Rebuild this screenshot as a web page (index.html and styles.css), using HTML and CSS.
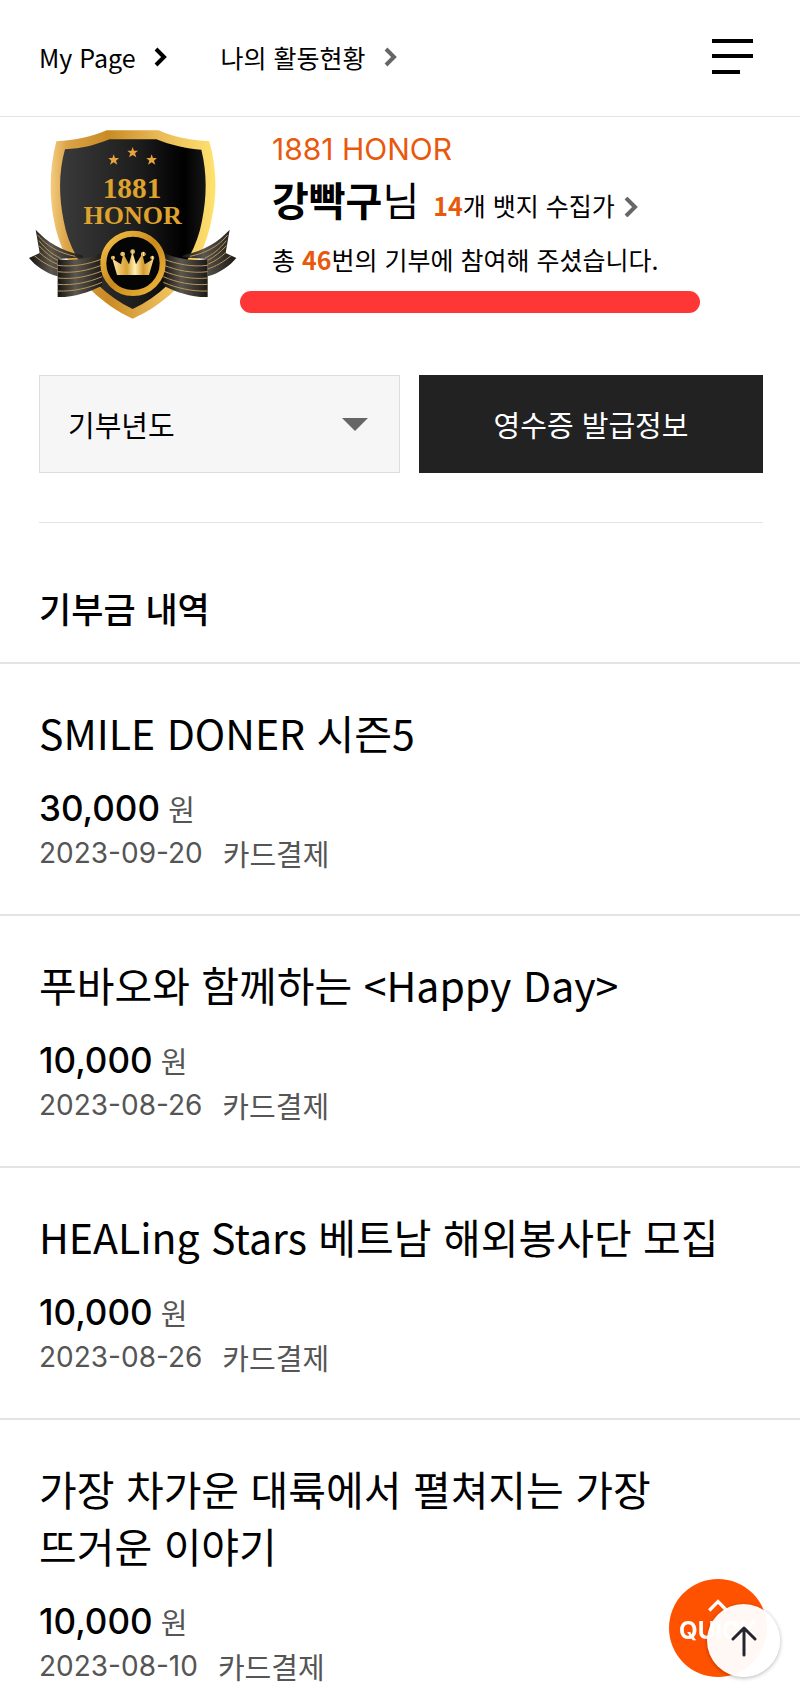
FILE: index.html
```html
<!DOCTYPE html>
<html lang="ko">
<head>
    <meta charset="UTF-8">
    <meta name="viewport" content="width=device-width, initial-scale=1.0">
    <title>나의 활동현황</title>
    <link rel="stylesheet" href="styles.css">
</head>
<body>
    <header class="header">
        <nav class="breadcrumb">
            <a href="#">My Page
                <svg class="chevron" viewBox="0 0 14 20"><path d="M2 2l8 8-8 8"/></svg>
            </a>
            <a href="#">나의 활동현황
                <svg class="chevron gray" viewBox="0 0 14 20"><path d="M2 2l8 8-8 8"/></svg>
            </a>
        </nav>
        <button class="menu-button" type="button" aria-label="메뉴">
            <svg viewBox="0 0 42 36"><path d="M0 0h41v4H0zM0 15h41v4H0zM0 31h28v4H0z"/></svg>
        </button>
    </header>

    <main>
        <section class="profile">
            <svg class="badge" viewBox="20 40 630 570" role="img" aria-label="1881 HONOR 뱃지">
                <defs>
                    <linearGradient id="gold" x1="0" x2="1">
                        <stop offset="0" stop-color="#f4cc80"/>
                        <stop offset=".1" stop-color="#dba347"/>
                        <stop offset=".35" stop-color="#c98b24"/>
                        <stop offset=".65" stop-color="#e9b856"/>
                        <stop offset="1" stop-color="#ffe26e"/>
                    </linearGradient>
                    <linearGradient id="dark" x1="0" x2="1">
                        <stop offset="0" stop-color="#3a3a3a"/>
                        <stop offset=".55" stop-color="#1c1c1c"/>
                        <stop offset=".85" stop-color="#000"/>
                        <stop offset="1" stop-color="#161616"/>
                    </linearGradient>
                    <linearGradient id="ribbon" x1="0" x2="1">
                        <stop offset="0" stop-color="#151412"/>
                        <stop offset=".4" stop-color="#5b564e"/>
                        <stop offset="1" stop-color="#1c1a17"/>
                    </linearGradient>
                    <linearGradient id="ring" x1="0" x2="1" y1="0" y2="1">
                        <stop offset="0" stop-color="#f6c34a"/>
                        <stop offset=".5" stop-color="#c98a1c"/>
                        <stop offset="1" stop-color="#f0b83c"/>
                    </linearGradient>
                    <linearGradient id="crown" x1="0" x2="1">
                        <stop offset="0" stop-color="#ffe9a6"/>
                        <stop offset=".35" stop-color="#d9a032"/>
                        <stop offset=".55" stop-color="#fff0b4"/>
                        <stop offset=".75" stop-color="#d59a2c"/>
                        <stop offset="1" stop-color="#fbdc8c"/>
                    </linearGradient>
                    <path id="star" d="M0-16l4 11h12L7 3l4 12L0 8l-11 7 4-12-9-8h12z"/>
                </defs>
                <path fill="url(#gold)" d="M108 77C165 75 215 62 259 44H415C455 62 510 75 567 77C590 160 590 240 574 310C552 430 480 545 337 609C200 545 120 430 100 310C86 235 88 155 108 77z"/>
                <path fill="url(#dark)" d="M134 101C185 99 225 88 268 71H408C450 88 500 100 543 102C560 170 560 240 545 315C525 425 455 525 337 580C222 525 150 425 130 315C114 235 116 165 134 101z"/>
                <g fill="#e7a43c">
                    <use href="#star" x="280" y="132"/>
                    <use href="#star" x="337" y="110"/>
                    <use href="#star" x="394" y="132"/>
                </g>
                <g class="badge-text">
                    <text x="335" y="246" font-size="88">1881</text>
                    <text x="337" y="324" font-size="78">HONOR</text>
                </g>
                <!-- ribbon tails -->
                <path fill="url(#ribbon)" d="M46 342C80 378 120 405 184 418L190 425 112 430V482C75 472 45 450 26 427L58 412z"/>
                <path fill="url(#ribbon)" d="M628 342C594 378 554 405 490 418L484 425 562 430V482C599 472 629 450 648 427L616 412z"/>
                <!-- ribbon front -->
                <path fill="url(#ribbon)" d="M112 430C160 438 205 428 245 412V510C205 530 160 545 112 544z"/>
                <path fill="url(#ribbon)" d="M562 430C514 438 469 428 429 412V510C469 530 514 545 562 544z"/>
                <g class="ribbon-lines">
                    <path d="M52 358C80 392 116 412 165 422M56 375C78 402 96 416 120 427M56 390C74 410 92 424 112 434M58 411C74 426 92 438 112 446M42 420C66 440 88 452 112 460"/>
                    <path d="M622 358C594 392 558 412 509 422M618 375C596 402 578 416 554 427M618 390C600 410 582 424 562 434M616 411C600 426 582 438 562 446M632 420C608 440 586 452 562 460"/>
                    <path d="M112 449C160 455 205 445 245 430M112 468C160 474 205 464 245 448M112 487C160 492 205 482 245 466M112 506C160 510 205 500 245 483M112 526C160 528 205 517 245 500"/>
                    <path d="M562 449C514 455 469 445 429 430M562 468C514 474 469 464 429 448M562 487C514 492 469 482 429 466M562 506C514 510 469 500 429 483M562 526C514 528 469 517 429 500"/>
                </g>
                <circle cx="338" cy="443" r="89" fill="#050505" stroke="url(#ring)" stroke-width="18"/>
                <g fill="url(#crown)">
                    <path d="M290 478L276 429 302 446 309 414 326 446 336 408 347 446 366 414 373 446 400 429 386 478z"/>
                    <circle cx="278" cy="426" r="6"/>
                    <circle cx="307" cy="415" r="7"/>
                    <circle cx="337" cy="408" r="7"/>
                    <circle cx="369" cy="415" r="7"/>
                    <circle cx="396" cy="426" r="6"/>
                </g>
            </svg>
            <div class="profile-info">
                <div class="grade">1881 HONOR</div>
                <div class="name-row">
                    <h1 class="name"><strong>강빡구</strong>님</h1>
                    <a class="badge-count" href="#"><em>14</em>개 뱃지 수집가
                        <svg class="chevron gray" viewBox="0 0 14 20"><path d="M2 1l9 9-9 9"/></svg>
                    </a>
                </div>
                <p class="total">총 <em>46</em>번의 기부에 참여해 주셨습니다.</p>
            </div>
            <div class="marker"></div>
        </section>

        <div class="controls">
            <div class="select-wrap">
                <select class="year-select" aria-label="기부년도">
                    <option>기부년도</option>
                    <option>2023</option>
                    <option>2022</option>
                </select>
            </div>
            <button class="receipt-button" type="button">영수증 발급정보</button>
        </div>

        <section class="history">
            <h2 class="history-title">기부금 내역</h2>
            <ul class="history-list">
                <li class="history-item">
                    <h3 class="item-title">SMILE DONER 시즌5</h3>
                    <div class="amount"><span class="num">30,000</span> 원</div>
                    <div class="meta"><span class="num">2023-09-20</span><span>카드결제</span></div>
                </li>
                <li class="history-item">
                    <h3 class="item-title">푸바오와 함께하는 &lt;Happy Day&gt;</h3>
                    <div class="amount"><span class="num">10,000</span> 원</div>
                    <div class="meta"><span class="num">2023-08-26</span><span>카드결제</span></div>
                </li>
                <li class="history-item">
                    <h3 class="item-title">HEALing Stars 베트남 해외봉사단 모집</h3>
                    <div class="amount"><span class="num">10,000</span> 원</div>
                    <div class="meta"><span class="num">2023-08-26</span><span>카드결제</span></div>
                </li>
                <li class="history-item">
                    <h3 class="item-title">가장 차가운 대륙에서 펼쳐지는 가장 뜨거운 이야기</h3>
                    <div class="amount"><span class="num">10,000</span> 원</div>
                    <div class="meta"><span class="num">2023-08-10</span><span>카드결제</span></div>
                </li>
            </ul>
        </section>
    </main>

    <button class="quick-button" type="button">
        <svg viewBox="0 0 20 12"><path d="M2 11l8-8 8 8"/></svg>
        QUICK
    </button>
    <button class="top-button" type="button" aria-label="맨 위로">
        <svg viewBox="0 0 26 32"><path d="M13 30V3M2 14L13 3l11 11"/></svg>
    </button>
</body>
</html>
```
FILE: styles.css
```css
:root {
    --orange: #e8590c;
    --quick: #ff5200;
    --line: #e4e4e4;
    --gray: #555;
    --font-kr: "Noto Sans CJK KR", sans-serif;
    --font-num: Inter, "Noto Sans CJK KR", sans-serif;
}

* {
    box-sizing: border-box;
    margin: 0;
    padding: 0;
}

body {
    background: #fff;
    color: #000;
    font-family: var(--font-kr);
    font-size: 25px;
}

a {
    color: inherit;
    text-decoration: none;
}

button {
    border: none;
    font-family: inherit;
    cursor: pointer;
}

em {
    font-style: normal;
    font-weight: 700;
    color: var(--orange);
}

.chevron {
    width: 14px;
    height: 20px;
    fill: none;
    stroke: #000;
    stroke-width: 4;
}

.chevron.gray {
    stroke: #666;
}

/* header */
.header {
    display: flex;
    align-items: center;
    justify-content: space-between;
    height: 117px;
    padding: 0 46px 2px 39px;
    border-bottom: 1px solid var(--line);
}

.breadcrumb {
    display: flex;
    gap: 53px;
}

.breadcrumb a {
    display: flex;
    align-items: center;
    gap: 18px;
}

.menu-button {
    height: 36px;
    background: none;
}

.menu-button svg {
    display: block;
    width: 42px;
    height: 36px;
}

/* profile */
.profile {
    position: relative;
    display: flex;
    gap: 35px;
    padding: 12px 37px 0 27px;
}

.badge {
    flex: none;
    width: 210px;
    height: 190px;
}

.badge-text {
    font-family: "Liberation Serif", serif;
    font-weight: 700;
    fill: #dfa22c;
    text-anchor: middle;
}

.ribbon-lines {
    fill: none;
    stroke: #b8965a;
    stroke-width: 3;
}

.grade {
    font-family: var(--font-num);
    font-size: 30px;
    line-height: 40px;
    color: var(--orange);
}

.name-row {
    display: flex;
    align-items: baseline;
    gap: 14px;
    line-height: 60px;
}

.name {
    font-size: 40px;
    font-weight: 400;
}

.badge-count .chevron {
    margin-left: 2px;
    vertical-align: -1px;
}

.total {
    margin-top: 4px;
    line-height: 40px;
}

.marker {
    position: absolute;
    top: 174px;
    left: 240px;
    width: 460px;
    height: 22px;
    border-radius: 11px;
    background: #ff3636;
}

/* year select + receipt button */
.controls {
    display: grid;
    grid-template-columns: 361fr 344fr;
    gap: 19px;
    margin: 56px 37px 0 39px;
    padding-bottom: 49px;
    border-bottom: 1px solid var(--line);
}

.select-wrap {
    position: relative;
}

.select-wrap::after {
    content: "";
    position: absolute;
    top: 43px;
    right: 32px;
    border: 13px solid transparent;
    border-top-color: #666;
    border-bottom: none;
    pointer-events: none;
}

.year-select {
    appearance: none;
    width: 100%;
    height: 98px;
    padding: 0 28px;
    border: 1px solid #ddd;
    border-radius: 0;
    background: #f6f6f6;
    color: #000;
    font-family: inherit;
    font-size: 29px;
}

.receipt-button {
    height: 98px;
    background: #222;
    color: #fff;
    font-size: 29px;
}

/* donation history */
.history-title {
    padding: 60px 39px 29px;
    font-size: 35px;
    font-weight: 500;
    line-height: 50px;
}

.history-list {
    list-style: none;
}

.history-item {
    padding: 40px 39px;
    border-top: 2px solid var(--line);
}

.history-item:last-child {
    padding-bottom: 0;
}

.item-title {
    margin-bottom: 23px;
    font-size: 41px;
    font-weight: 400;
    line-height: 57px;
    word-break: keep-all;
}

.num {
    font-family: var(--font-num);
}

.amount {
    font-size: 29px;
    line-height: 48px;
    color: var(--gray);
}

.amount .num {
    font-size: 35px;
    font-weight: 500;
    color: #000;
}

.meta {
    display: flex;
    gap: 20px;
    font-size: 29px;
    line-height: 42px;
    color: var(--gray);
}

.meta .num {
    font-size: 28px;
}

/* floating buttons */
.quick-button {
    position: fixed;
    right: 33px;
    bottom: 16px;
    display: flex;
    flex-direction: column;
    align-items: center;
    width: 98px;
    height: 98px;
    padding-top: 18px;
    border-radius: 50%;
    background: var(--quick);
    color: #fff;
    font-family: var(--font-num);
    font-size: 24px;
    font-weight: 700;
    line-height: 36px;
}

.quick-button svg {
    width: 22px;
    height: 16px;
    fill: none;
    stroke: #fff;
    stroke-width: 3;
}

.top-button {
    position: fixed;
    right: 20px;
    bottom: 16px;
    display: flex;
    align-items: center;
    justify-content: center;
    width: 73px;
    height: 73px;
    border-radius: 50%;
    background: rgba(255, 255, 255, 0.96);
    box-shadow: 0 1px 4px rgba(0, 0, 0, 0.3);
}

.top-button svg {
    width: 26px;
    height: 32px;
    fill: none;
    stroke: #25252f;
    stroke-width: 3;
    stroke-linecap: round;
    stroke-linejoin: round;
}
```
